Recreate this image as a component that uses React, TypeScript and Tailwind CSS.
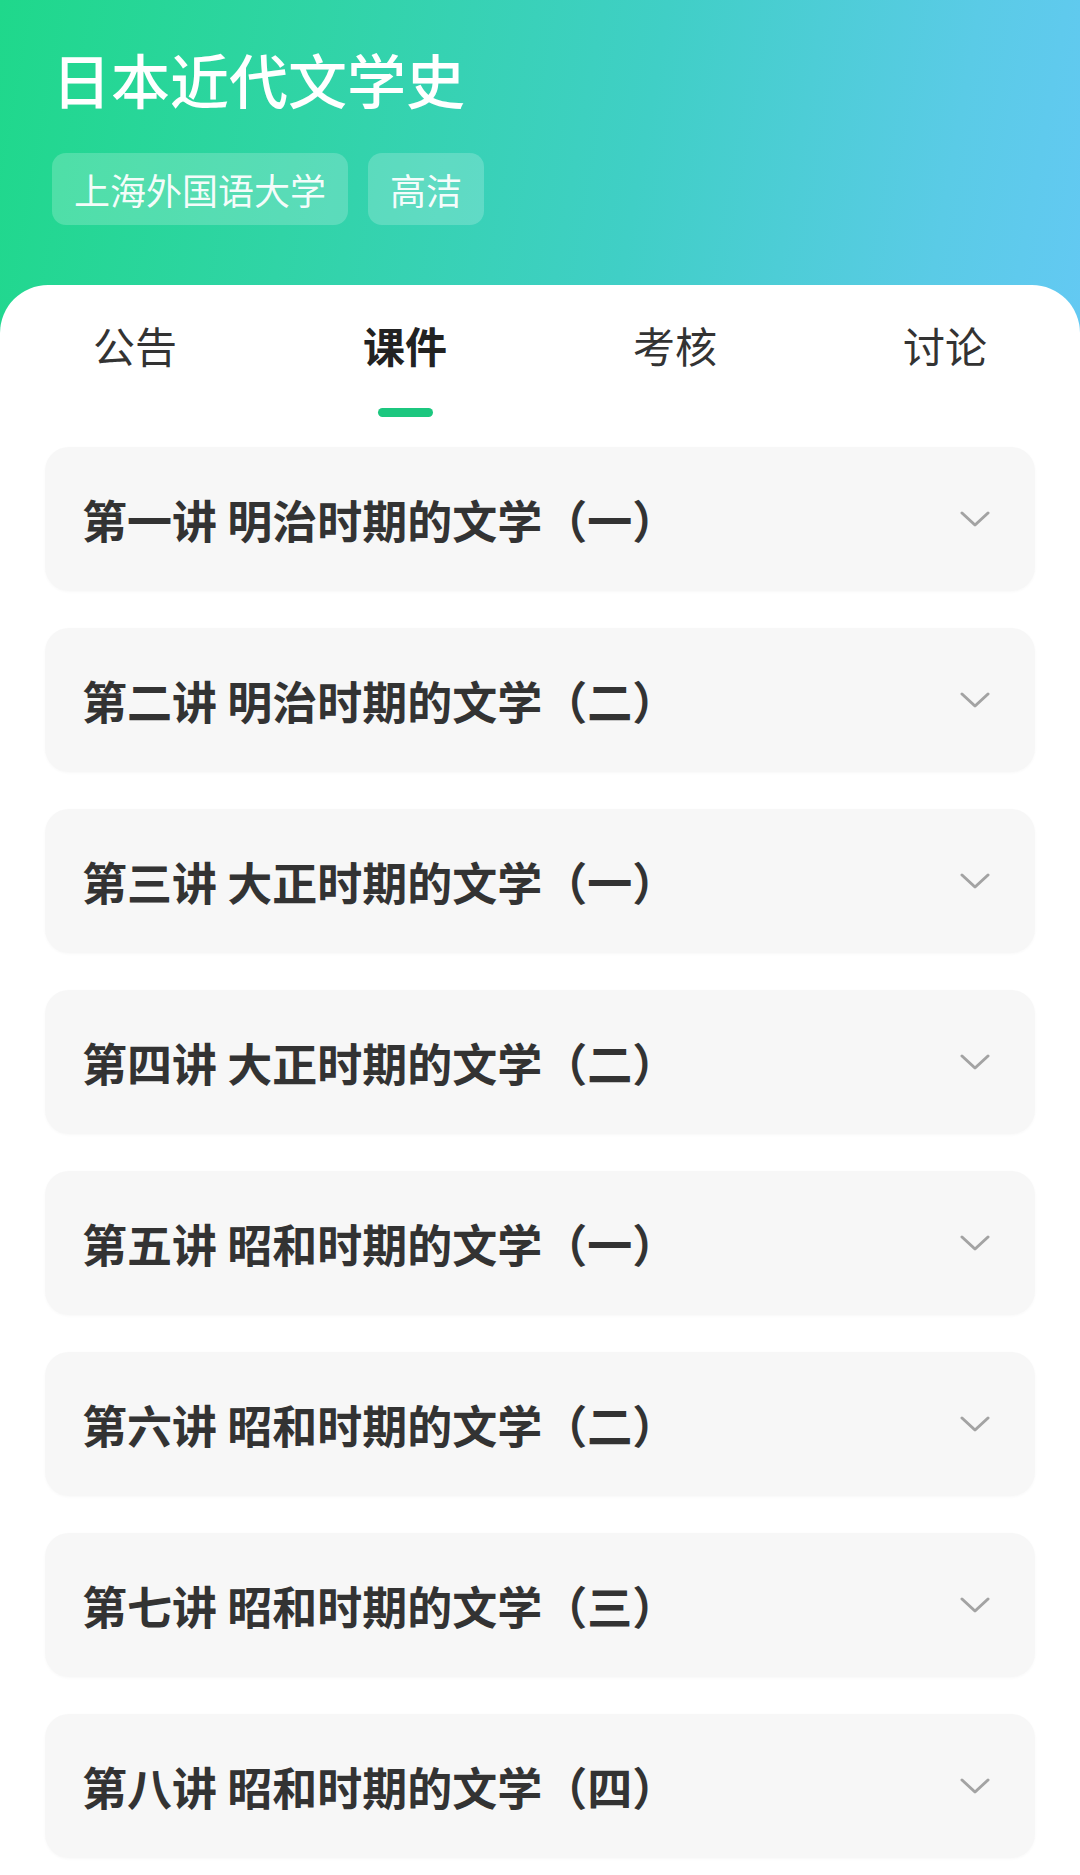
const lessons = [
  "第一讲 明治时期的文学（一）",
  "第二讲 明治时期的文学（二）",
  "第三讲 大正时期的文学（一）",
  "第四讲 大正时期的文学（二）",
  "第五讲 昭和时期的文学（一）",
  "第六讲 昭和时期的文学（二）",
  "第七讲 昭和时期的文学（三）",
  "第八讲 昭和时期的文学（四）",
];

const tabs = ["公告", "课件", "考核", "讨论"];

function Chevron() {
  return (
    <svg width="30" height="17" viewBox="0 0 30 17" fill="none">
      <path d="M2 2l13 12L28 2" stroke="#a3a3a3" strokeWidth="3" strokeLinecap="round" strokeLinejoin="round" />
    </svg>
  );
}

export default function App() {
  return (
    <div
      className="min-h-[1875px] w-[1080px] bg-white text-[#333]"
      style={{ fontFamily: '"Noto Sans CJK SC", "Noto Sans", sans-serif' }}
    >
      <div className="bg-[linear-gradient(100deg,#1fd88b_0%,#30d4a6_28%,#40cfc6_58%,#5acbe6_85%,#64c9f4_100%)]">
        <div className="px-[52px] pt-[49px]">
          <h1 className="text-[59px] font-medium leading-none text-white">日本近代文学史</h1>
          <div className="mt-[45px] flex gap-[20px]">
            <span className="flex h-[72px] items-center rounded-[14px] bg-white/20 px-[22px] text-[36px] font-normal leading-none text-white/95">
              上海外国语大学
            </span>
            <span className="flex h-[72px] items-center rounded-[14px] bg-white/20 px-[22px] text-[36px] font-normal leading-none text-white/95">
              高洁
            </span>
          </div>
        </div>

        <div className="mt-[60px] rounded-t-[48px] bg-white pt-[39px]">
          <div className="grid grid-cols-4">
            {tabs.map((tab, i) => (
              <div key={tab} className="flex flex-col items-center">
                <span
                  className={
                    i === 1
                      ? "text-[42px] font-bold leading-none text-[#222]"
                      : "text-[42px] font-normal leading-none text-[#333]"
                  }
                >
                  {tab}
                </span>
                <div
                  className={
                    i === 1
                      ? "mt-[42px] h-[9px] w-[55px] rounded-full bg-[#1cc77f]"
                      : "mt-[42px] h-[9px] w-[55px]"
                  }
                />
              </div>
            ))}
          </div>
        </div>
      </div>

      <div className="flex flex-col gap-[37px] px-[45px] pt-[30px] pb-[16px]">
        {lessons.map((title) => (
          <div
            key={title}
            className="flex h-[144px] items-center justify-between rounded-[24px] bg-[#f7f7f7] pl-[37px] pr-[45px] shadow-[0_1px_3px_rgba(0,0,0,0.03)]"
          >
            <span className="text-[45px] font-semibold leading-none text-[#333]">{title}</span>
            <Chevron />
          </div>
        ))}
      </div>
    </div>
  );
}
